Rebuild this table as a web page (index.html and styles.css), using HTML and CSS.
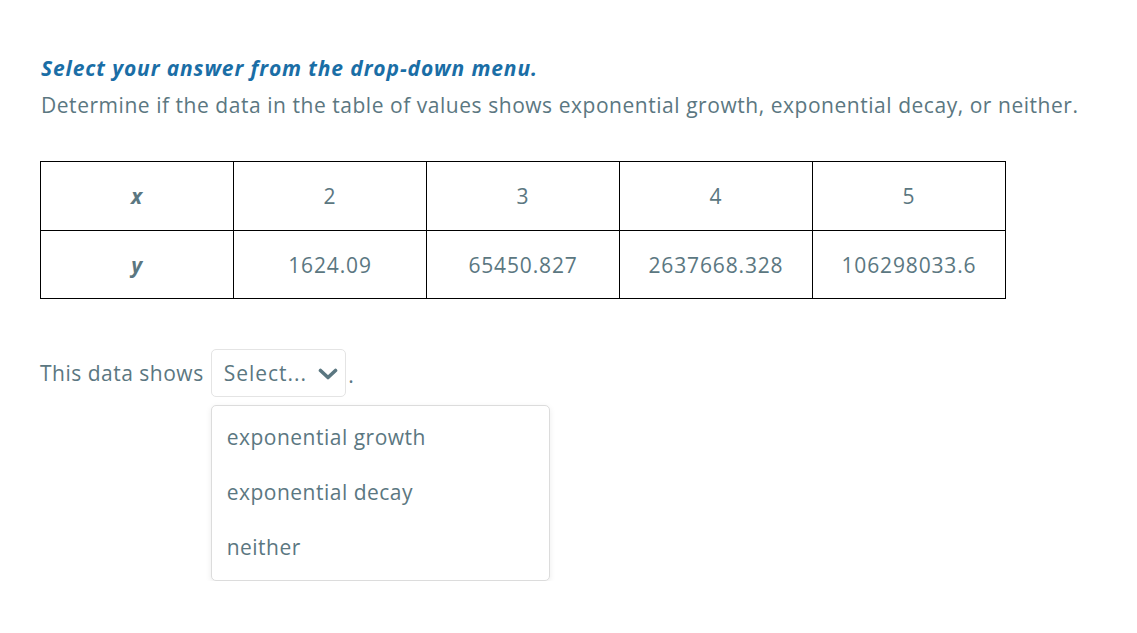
FILE: index.html
```html
<!DOCTYPE html>
<html>
<head>
<meta charset="utf-8">
<link rel="stylesheet" href="styles.css">
</head>
<body>
<main class="question">
  <h2 class="instruction">Select your answer from the drop-down menu.</h2>
  <p class="prompt">Determine if the data in the table of values shows exponential growth, exponential decay, or neither.</p>
  <table class="values">
    <tr class="row-x">
      <th>x</th><td>2</td><td>3</td><td>4</td><td>5</td>
    </tr>
    <tr class="row-y">
      <th>y</th><td>1624.09</td><td>65450.827</td><td>2637668.328</td><td>106298033.6</td>
    </tr>
  </table>
  <div class="answer">
    <span class="lead">This data shows</span>
    <div class="select">
      <span class="select-label">Select...</span>
      <svg class="chev" width="20" height="12" viewBox="0 0 20 12"><path d="M2.5 2.5 L10 9.5 L17.5 2.5" fill="none" stroke="#5b7781" stroke-width="3.6" stroke-linecap="round" stroke-linejoin="round"/></svg>
    </div>
    <span class="dot">.</span>
    <div class="menu">
      <div class="option">exponential growth</div>
      <div class="option">exponential decay</div>
      <div class="option">neither</div>
    </div>
  </div>
</main>
</body>
</html>
```
FILE: styles.css
```css
* { box-sizing: border-box; }
body {
  margin: 0;
  background: #fff;
  font-family: "Open Sans", "Noto Sans", sans-serif;
  color: #5b7781;
}
.question {
  padding: 52px 0 0 41px;
}
.instruction {
  margin: 0;
  font-size: 21px;
  font-weight: 700;
  font-style: italic;
  color: #1a6ea6;
  line-height: 32px;
  letter-spacing: 0.88px;
}
.prompt {
  margin: 6px 0 0;
  font-size: 21px;
  line-height: 30px;
  letter-spacing: 0.54px;
}
.values {
  margin: 41px 0 0 -1px;
  border-collapse: collapse;
  font-size: 21px;
  letter-spacing: 0.85px;
}
.values th, .values td {
  border: 1px solid #000;
  width: 193px;
  text-align: center;
  padding: 0;
}
.row-x th, .row-x td { height: 69px; }
.row-y th, .row-y td { height: 68px; }
.values th {
  font-style: italic;
  font-weight: 700;
}
.answer {
  margin-top: 50px;
  margin-left: -1px;
  display: grid;
  grid-template-columns: auto auto auto 1fr;
  row-gap: 4px;
  align-items: start;
  font-size: 21px;
  letter-spacing: 0.5px;
}
.lead {
  line-height: 48px;
  margin-right: 7px;
}
.select {
  display: flex;
  align-items: center;
  height: 48px;
  padding: 0 7px 0 12px;
  border: 1px solid #e4e4e4;
  border-radius: 5px;
  gap: 11px;
}
.select-label { letter-spacing: 1px; }
.chev { margin-top: 2px; display: block; }
.dot { line-height: 52px; margin-left: 2px; }
.menu {
  grid-column: 2 / 5;
  justify-self: start;
  width: 339px;
  padding: 4px 0 5px;
  background: #fff;
  border: 1px solid #dcdcdc;
  border-radius: 5px;
  box-shadow: 0 2px 6px rgba(0,0,0,0.08);
}
.option {
  height: 55px;
  line-height: 55px;
  padding-left: 15px;
}
```
